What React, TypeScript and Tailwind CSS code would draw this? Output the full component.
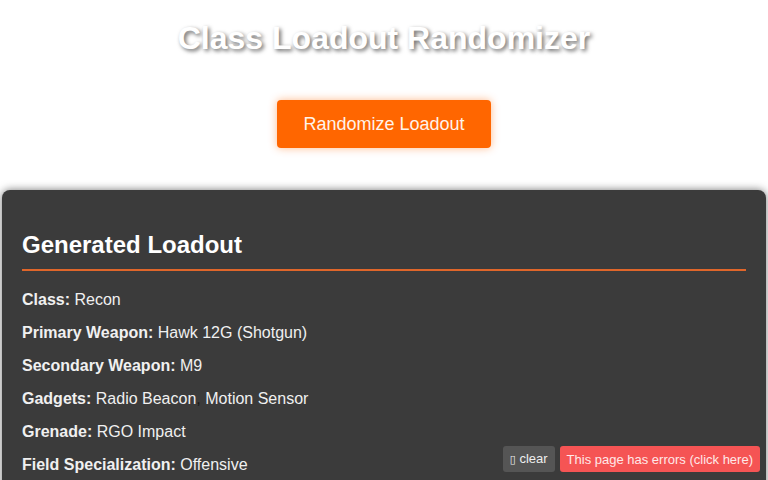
const loadout = [
  { label: 'Class', value: 'Recon' },
  { label: 'Primary Weapon', value: 'Hawk 12G (Shotgun)' },
  { label: 'Secondary Weapon', value: 'M9' },
  { label: 'Gadgets', value: ['Radio Beacon', 'Motion Sensor'] },
  { label: 'Grenade', value: 'RGO Impact' },
  { label: 'Field Specialization', value: 'Offensive' },
]

function Row({ label, value }: { label: string; value: string | string[] }) {
  return (
    <p className="text-[16px] leading-[18px] text-[#f0f0f0]">
      <strong className="font-bold">{label}:</strong>{' '}
      {Array.isArray(value)
        ? value.map((v, i) => (
            <span key={v}>
              {i > 0 && <span className="text-[#1a1a1a]">, </span>}
              {v}
            </span>
          ))
        : value}
    </p>
  )
}

export default function App() {
  return (
    <div className="h-[480px] overflow-hidden bg-white font-['Liberation_Sans',Arial,sans-serif]">
      <h1 className="pt-[20px] text-center text-[32px] font-bold leading-[37px] text-white [text-shadow:2px_2px_4px_rgba(0,0,0,0.6)]">
        Class Loadout Randomizer
      </h1>

      <div className="mt-[43px] flex justify-center">
        <button
          type="button"
          className="h-[48px] w-[214px] rounded-[4px] bg-[#ff6600] text-[18px] text-[#fff3ea] shadow-[0_0_8px_rgba(255,102,0,0.45)]"
        >
          Randomize Loadout
        </button>
      </div>

      <section className="mx-[2px] mt-[42px] rounded-t-[8px] bg-[#3b3b3b] px-[20px] pt-[41px] pb-[30px] shadow-[0_0_8px_rgba(0,0,0,0.55)]">
        <h2 className="border-b-2 border-[#e0662a] pb-[10px] text-[24px] font-bold leading-[28px] text-white">
          Generated Loadout
        </h2>
        <div className="mt-[20px] flex flex-col gap-[15px]">
          {loadout.map((row) => (
            <Row key={row.label} {...row} />
          ))}
        </div>
      </section>

      {/* error badges pinned to the corner */}
      <div className="fixed right-[8px] bottom-[8px] flex gap-[5px] text-[13px] leading-[15px]">
        <button type="button" className="rounded-[3px] bg-[#555555] px-[7px] py-[5px] text-[#eeeeee]">
          <span className="font-['DejaVu_Sans'] text-[11px]">{'\u25af'}</span> clear
        </button>
        <button type="button" className="rounded-[3px] bg-[#f55454] px-[7px] py-[5px] text-[#ffe8e8]">
          This page has errors (click here)
        </button>
      </div>
    </div>
  )
}
